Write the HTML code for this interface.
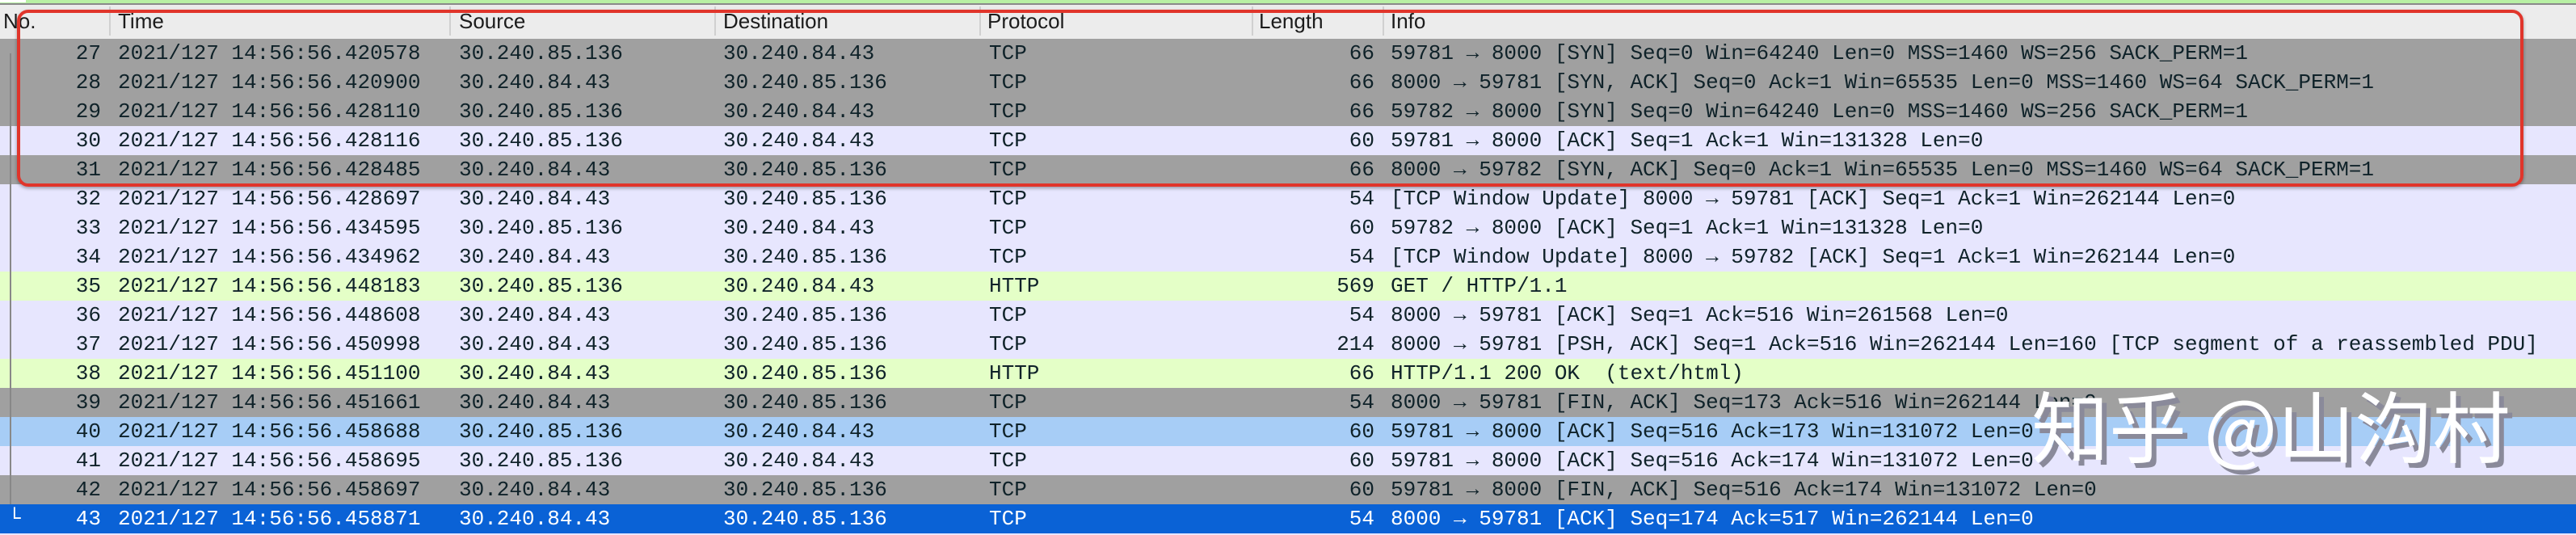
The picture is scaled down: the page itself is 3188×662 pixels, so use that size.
<!DOCTYPE html>
<html><head><meta charset="utf-8"><style>
html,body{margin:0;padding:0;}
body{width:3188px;height:662px;overflow:hidden;background:#e7e6fe;position:relative;font-family:"Liberation Mono",monospace;}
.top{position:absolute;left:0;top:0;width:3188px;height:4px;background:#b8f0a4;}
.top2{position:absolute;left:0;top:4px;width:3188px;height:2px;background:#8a8a8a;}
.wbox{position:absolute;left:0;top:0;width:32px;height:3px;background:#fff;}
.hdr{position:absolute;left:0;top:6px;width:3188px;height:42px;background:#ececec;font-family:"Liberation Sans",sans-serif;font-size:26px;color:#1c1c1c;}
.hdr span{position:absolute;top:5px;}
.hdr i{position:absolute;top:2px;width:2px;height:36px;background:#d0d0d0;}
.row{position:absolute;left:0;width:3188px;height:36px;font-size:26px;line-height:36px;color:#0f2229;white-space:pre;}
.row span{position:absolute;top:0;}
.g{background:#a0a0a0;}.l{background:#e7e6fe;}.h{background:#e4ffc7;}.b{background:#a7cdf6;}.s{background:#0a62d6;color:#fff;}
.no{right:3063px;text-align:right;}
.len{right:1487px;text-align:right;}
.box{position:absolute;left:21px;top:12px;width:3094px;height:211px;border:4px solid #e0352b;border-radius:14px;box-shadow:0 2px 4px rgba(0,0,0,.35);}
.vl{position:absolute;left:12px;top:66px;width:2px;height:558px;background:#888;}
.wm{position:absolute;left:2514px;top:468px;font-family:"Noto Sans CJK SC",sans-serif;font-size:96px;line-height:112px;color:#fff;text-shadow:6px 6px 0 #8a8a9a;white-space:nowrap;}
</style></head><body>
<div class="top"></div><div class="top2"></div><div class="wbox"></div>
<div class="hdr">
<span style="left:4px">No.</span><i style="left:135px"></i>
<span style="left:146px">Time</span><i style="left:556px"></i>
<span style="left:568px">Source</span><i style="left:884px"></i>
<span style="left:895px">Destination</span><i style="left:1212px"></i>
<span style="left:1222px">Protocol</span><i style="left:1549px"></i>
<span style="left:1558px">Length</span><i style="left:1711px"></i>
<span style="left:1721px">Info</span>
</div>

<div class="row g" style="top:48px"><span class="no">27</span><span style="left:146px">2021/127 14:56:56.420578</span><span style="left:568px">30.240.85.136</span><span style="left:895px">30.240.84.43</span><span style="left:1224px">TCP</span><span class="len">66</span><span style="left:1721px">59781 → 8000 [SYN] Seq=0 Win=64240 Len=0 MSS=1460 WS=256 SACK_PERM=1</span></div>
<div class="row g" style="top:84px"><span class="no">28</span><span style="left:146px">2021/127 14:56:56.420900</span><span style="left:568px">30.240.84.43</span><span style="left:895px">30.240.85.136</span><span style="left:1224px">TCP</span><span class="len">66</span><span style="left:1721px">8000 → 59781 [SYN, ACK] Seq=0 Ack=1 Win=65535 Len=0 MSS=1460 WS=64 SACK_PERM=1</span></div>
<div class="row g" style="top:120px"><span class="no">29</span><span style="left:146px">2021/127 14:56:56.428110</span><span style="left:568px">30.240.85.136</span><span style="left:895px">30.240.84.43</span><span style="left:1224px">TCP</span><span class="len">66</span><span style="left:1721px">59782 → 8000 [SYN] Seq=0 Win=64240 Len=0 MSS=1460 WS=256 SACK_PERM=1</span></div>
<div class="row l" style="top:156px"><span class="no">30</span><span style="left:146px">2021/127 14:56:56.428116</span><span style="left:568px">30.240.85.136</span><span style="left:895px">30.240.84.43</span><span style="left:1224px">TCP</span><span class="len">60</span><span style="left:1721px">59781 → 8000 [ACK] Seq=1 Ack=1 Win=131328 Len=0</span></div>
<div class="row g" style="top:192px"><span class="no">31</span><span style="left:146px">2021/127 14:56:56.428485</span><span style="left:568px">30.240.84.43</span><span style="left:895px">30.240.85.136</span><span style="left:1224px">TCP</span><span class="len">66</span><span style="left:1721px">8000 → 59782 [SYN, ACK] Seq=0 Ack=1 Win=65535 Len=0 MSS=1460 WS=64 SACK_PERM=1</span></div>
<div class="row l" style="top:228px"><span class="no">32</span><span style="left:146px">2021/127 14:56:56.428697</span><span style="left:568px">30.240.84.43</span><span style="left:895px">30.240.85.136</span><span style="left:1224px">TCP</span><span class="len">54</span><span style="left:1721px">[TCP Window Update] 8000 → 59781 [ACK] Seq=1 Ack=1 Win=262144 Len=0</span></div>
<div class="row l" style="top:264px"><span class="no">33</span><span style="left:146px">2021/127 14:56:56.434595</span><span style="left:568px">30.240.85.136</span><span style="left:895px">30.240.84.43</span><span style="left:1224px">TCP</span><span class="len">60</span><span style="left:1721px">59782 → 8000 [ACK] Seq=1 Ack=1 Win=131328 Len=0</span></div>
<div class="row l" style="top:300px"><span class="no">34</span><span style="left:146px">2021/127 14:56:56.434962</span><span style="left:568px">30.240.84.43</span><span style="left:895px">30.240.85.136</span><span style="left:1224px">TCP</span><span class="len">54</span><span style="left:1721px">[TCP Window Update] 8000 → 59782 [ACK] Seq=1 Ack=1 Win=262144 Len=0</span></div>
<div class="row h" style="top:336px"><span class="no">35</span><span style="left:146px">2021/127 14:56:56.448183</span><span style="left:568px">30.240.85.136</span><span style="left:895px">30.240.84.43</span><span style="left:1224px">HTTP</span><span class="len">569</span><span style="left:1721px">GET / HTTP/1.1</span></div>
<div class="row l" style="top:372px"><span class="no">36</span><span style="left:146px">2021/127 14:56:56.448608</span><span style="left:568px">30.240.84.43</span><span style="left:895px">30.240.85.136</span><span style="left:1224px">TCP</span><span class="len">54</span><span style="left:1721px">8000 → 59781 [ACK] Seq=1 Ack=516 Win=261568 Len=0</span></div>
<div class="row l" style="top:408px"><span class="no">37</span><span style="left:146px">2021/127 14:56:56.450998</span><span style="left:568px">30.240.84.43</span><span style="left:895px">30.240.85.136</span><span style="left:1224px">TCP</span><span class="len">214</span><span style="left:1721px">8000 → 59781 [PSH, ACK] Seq=1 Ack=516 Win=262144 Len=160 [TCP segment of a reassembled PDU]</span></div>
<div class="row h" style="top:444px"><span class="no">38</span><span style="left:146px">2021/127 14:56:56.451100</span><span style="left:568px">30.240.84.43</span><span style="left:895px">30.240.85.136</span><span style="left:1224px">HTTP</span><span class="len">66</span><span style="left:1721px">HTTP/1.1 200 OK  (text/html)</span></div>
<div class="row g" style="top:480px"><span class="no">39</span><span style="left:146px">2021/127 14:56:56.451661</span><span style="left:568px">30.240.84.43</span><span style="left:895px">30.240.85.136</span><span style="left:1224px">TCP</span><span class="len">54</span><span style="left:1721px">8000 → 59781 [FIN, ACK] Seq=173 Ack=516 Win=262144 Len=0</span></div>
<div class="row b" style="top:516px"><span class="no">40</span><span style="left:146px">2021/127 14:56:56.458688</span><span style="left:568px">30.240.85.136</span><span style="left:895px">30.240.84.43</span><span style="left:1224px">TCP</span><span class="len">60</span><span style="left:1721px">59781 → 8000 [ACK] Seq=516 Ack=173 Win=131072 Len=0</span></div>
<div class="row l" style="top:552px"><span class="no">41</span><span style="left:146px">2021/127 14:56:56.458695</span><span style="left:568px">30.240.85.136</span><span style="left:895px">30.240.84.43</span><span style="left:1224px">TCP</span><span class="len">60</span><span style="left:1721px">59781 → 8000 [ACK] Seq=516 Ack=174 Win=131072 Len=0</span></div>
<div class="row g" style="top:588px"><span class="no">42</span><span style="left:146px">2021/127 14:56:56.458697</span><span style="left:568px">30.240.84.43</span><span style="left:895px">30.240.85.136</span><span style="left:1224px">TCP</span><span class="len">60</span><span style="left:1721px">59781 → 8000 [FIN, ACK] Seq=516 Ack=174 Win=131072 Len=0</span></div>
<div class="row s" style="top:624px"><span style="left:10px">└</span><span class="no">43</span><span style="left:146px">2021/127 14:56:56.458871</span><span style="left:568px">30.240.84.43</span><span style="left:895px">30.240.85.136</span><span style="left:1224px">TCP</span><span class="len">54</span><span style="left:1721px">8000 → 59781 [ACK] Seq=174 Ack=517 Win=262144 Len=0</span></div>

<div class="vl"></div>
<div class="box"></div>
<div class="wm">知乎 @山沟村</div>
</body></html>
